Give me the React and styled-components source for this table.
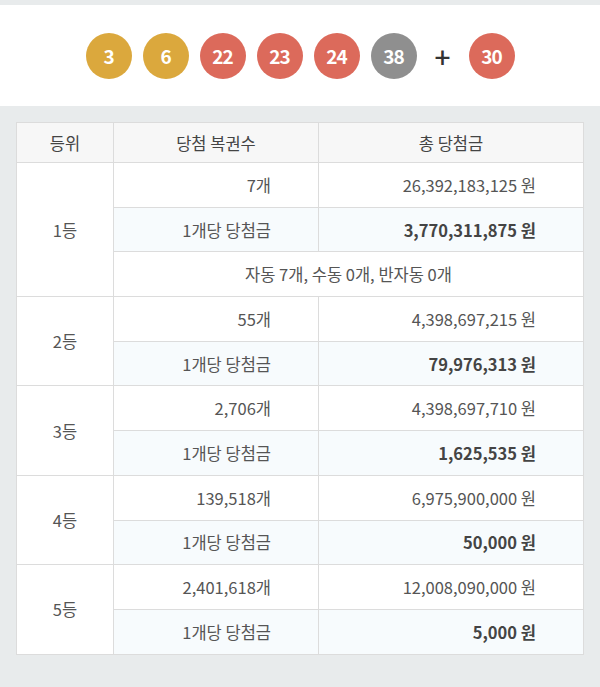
import React from "react";
import styled, { createGlobalStyle } from "styled-components";

const balls = [
  { n: 3, c: "yellow" },
  { n: 6, c: "yellow" },
  { n: 22, c: "red" },
  { n: 23, c: "red" },
  { n: 24, c: "red" },
  { n: 38, c: "gray" },
];
const bonus = { n: 30, c: "red" };

const ranks = [
  { rank: "1등", count: "7개", total: "26,392,183,125 원", each: "3,770,311,875 원", note: "자동 7개, 수동 0개, 반자동 0개" },
  { rank: "2등", count: "55개", total: "4,398,697,215 원", each: "79,976,313 원" },
  { rank: "3등", count: "2,706개", total: "4,398,697,710 원", each: "1,625,535 원" },
  { rank: "4등", count: "139,518개", total: "6,975,900,000 원", each: "50,000 원" },
  { rank: "5등", count: "2,401,618개", total: "12,008,090,000 원", each: "5,000 원" },
];

const colors = { yellow: "#dba83d", red: "#dc6a5b", gray: "#8f8f8f" };

const App = () => (
  <>
    <GlobalStyle />
    <Page>
      <BallPanel>
        {balls.map((b) => (
          <Ball key={b.n} $color={colors[b.c]}>{b.n}</Ball>
        ))}
        <Plus>+</Plus>
        <Ball $color={colors[bonus.c]}>{bonus.n}</Ball>
      </BallPanel>
      <TableWrap>
        <Table>
          <colgroup>
            <col style={{ width: "97px" }} />
            <col style={{ width: "205px" }} />
            <col />
          </colgroup>
          <thead>
            <tr>
              <Th>등위</Th>
              <Th>당첨 복권수</Th>
              <Th>총 당첨금</Th>
            </tr>
          </thead>
          <tbody>
            {ranks.map((r) => (
              <React.Fragment key={r.rank}>
                <Row>
                  <RankCell rowSpan={r.note ? 3 : 2}>{r.rank}</RankCell>
                  <NumCell>{r.count}</NumCell>
                  <NumCell>{r.total}</NumCell>
                </Row>
                <Row>
                  <NumCell $tint>1개당 당첨금</NumCell>
                  <NumCell $tint $bold>{r.each}</NumCell>
                </Row>
                {r.note && (
                  <Row>
                    <NoteCell colSpan={2}>{r.note}</NoteCell>
                  </Row>
                )}
              </React.Fragment>
            ))}
          </tbody>
        </Table>
      </TableWrap>
    </Page>
  </>
);

const GlobalStyle = createGlobalStyle`
  body {
    margin: 0;
    background: #e8ebec;
    font-family: "Noto Sans CJK KR", "Noto Sans", sans-serif;
  }
`;

const Page = styled.div`
  width: 600px;
  min-height: 687px;
  padding-top: 5px;
  background: #e8ebec;
`;

const BallPanel = styled.div`
  height: 101px;
  background: #ffffff;
  display: flex;
  align-items: center;
  justify-content: center;
  gap: 11px;
`;

const Ball = styled.div`
  width: 46px;
  height: 46px;
  border-radius: 50%;
  background: ${(p) => p.$color};
  color: #fff;
  display: flex;
  align-items: center;
  justify-content: center;
  font-size: 19px;
  font-weight: 700;
  letter-spacing: -1px;
`;

const Plus = styled.span`
  width: 16px;
  margin: 0 7px;
  text-align: center;
  font-size: 28px;
  font-weight: 500;
  color: #333;
  line-height: 1;
`;

const TableWrap = styled.div`
  padding: 16px 16px 0 16px;
`;

const Table = styled.table`
  width: 100%;
  border-collapse: collapse;
  table-layout: fixed;
  background: #fff;
  border: 1px solid #dcdcdc;
  font-size: 16.5px;
  color: #555;
`;

const Th = styled.th`
  height: 39px;
  background: #f7f7f7;
  border: 1px solid #dcdcdc;
  font-weight: 400;
  color: #444;
  text-align: center;
  padding: 0;
`;

const Row = styled.tr`
  height: 44.7px;
`;

const RankCell = styled.td`
  border: 1px solid #dcdcdc;
  text-align: center;
  background: #fff;
`;

const NumCell = styled.td`
  border: 1px solid #dcdcdc;
  text-align: right;
  padding: 0 47px 0 0;
  background: ${(p) => (p.$tint ? "#f7fbfd" : "#fff")};
  font-weight: ${(p) => (p.$bold ? 700 : 400)};
  color: ${(p) => (p.$bold ? "#444" : "#555")};
  white-space: nowrap;
`;

const NoteCell = styled.td`
  border: 1px solid #dcdcdc;
  text-align: center;
  background: #fff;
`;

export default App;
